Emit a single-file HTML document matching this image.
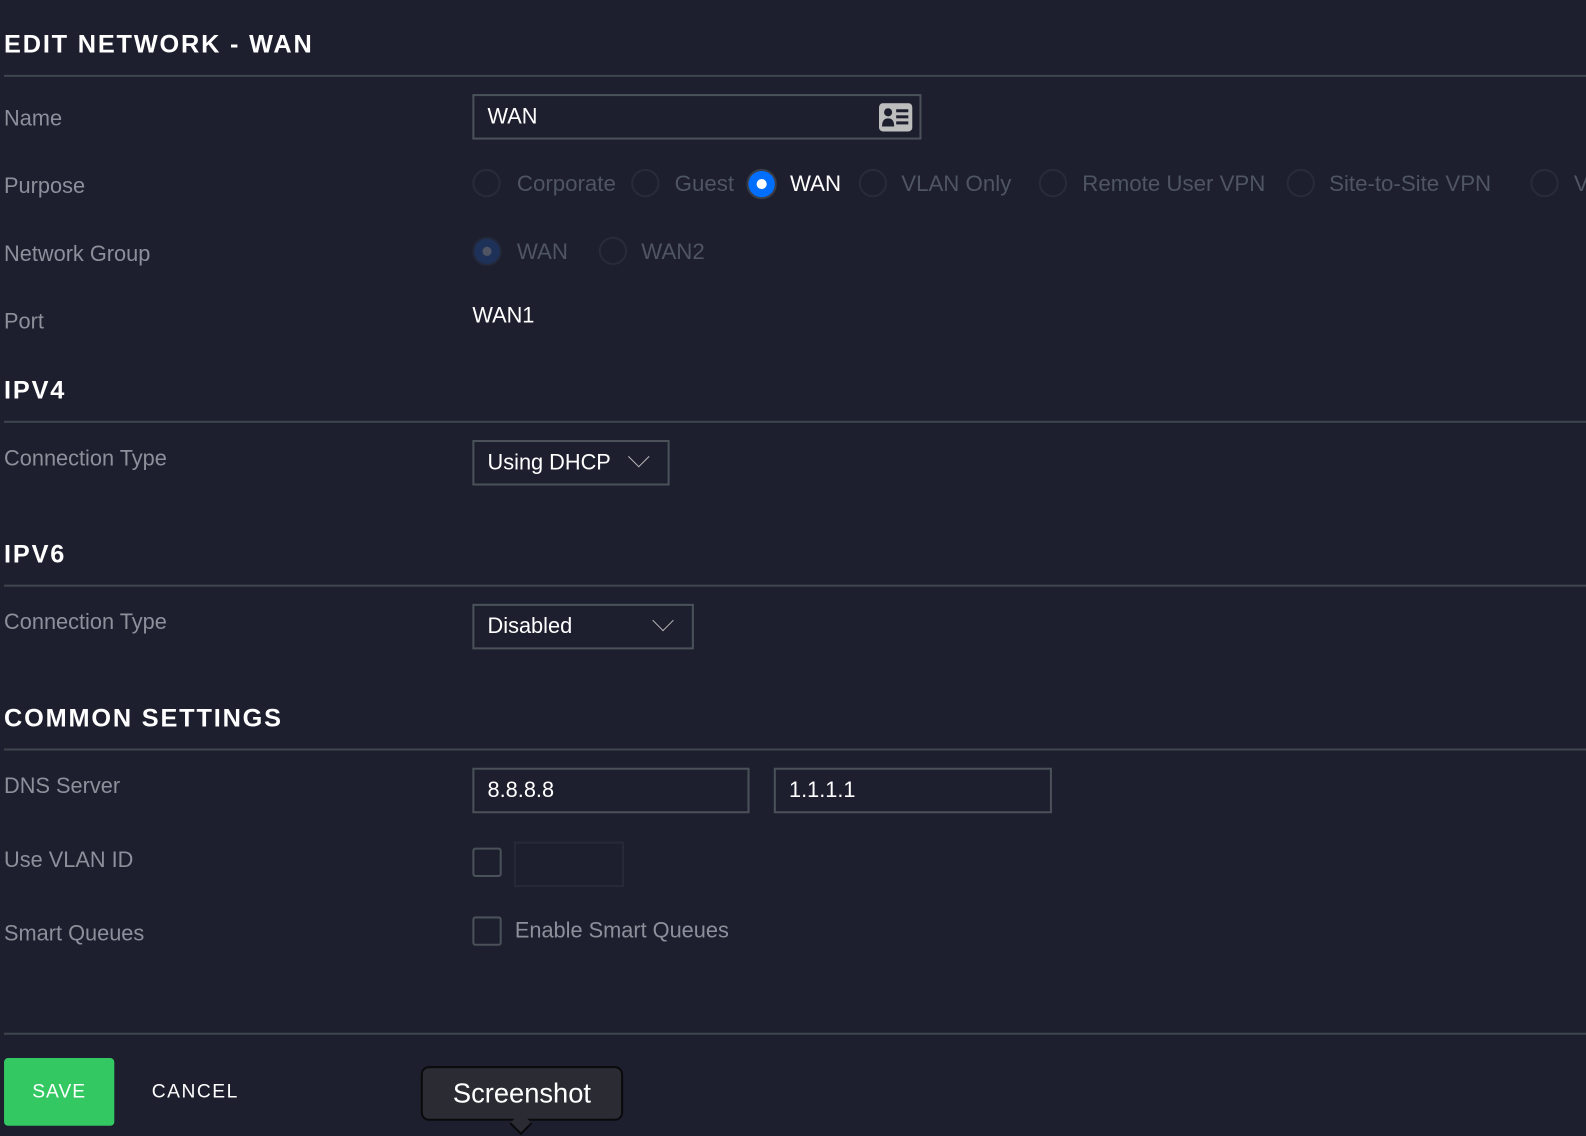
<!DOCTYPE html>
<html><head><style>
body{margin:0;width:1586px;height:1136px;background:#1d1f2e;font-family:"Liberation Sans",sans-serif;overflow:hidden;position:relative}
#w{position:absolute;left:0;top:0;width:1568px;height:1123px;transform:scale(1.0115);transform-origin:0 0}
.a{position:absolute;white-space:nowrap}
.h{color:#fff;font-weight:bold;font-size:25px;letter-spacing:1.8px;line-height:30px}
.l{color:#8c909a;font-size:21.5px;line-height:24px}
.hr{position:absolute;left:4px;right:0;height:2px;background:#3f464e}
.box{position:absolute;border:2px solid #4a5158;box-sizing:border-box;color:#fff;font-size:21.5px;line-height:41px;padding-left:13px}
.r{position:absolute;width:28px;height:28px;border-radius:50%;border:2px solid #282b3a;box-sizing:border-box}
.rt{color:#4f5562;font-size:22px;line-height:24px}
.cb{position:absolute;width:29px;height:29px;border:2px solid #4a5158;border-radius:3px;box-sizing:border-box}
.chev{position:absolute;width:14px;height:14px;border-right:1.5px solid #bbb;border-bottom:1.5px solid #bbb;transform:rotate(45deg)}
</style></head><body><div id="w">
<div class="a h" style="left:4px;top:29px">EDIT NETWORK - WAN</div>
<div class="hr" style="top:74px"></div>
<div class="a l" style="left:4px;top:105px">Name</div>
<div class="box" style="left:467px;top:93px;width:444px;height:45px">WAN</div>
<svg class="a" style="left:869px;top:102px" width="33" height="28" viewBox="0 0 33 28"><rect x="0" y="0" width="33" height="28" rx="4" fill="#bdbdbd"/><circle cx="9" cy="9" r="4" fill="#1d1f2e"/><path d="M3 23 q0-8 6-8 q6 0 6 8z" fill="#1d1f2e"/><rect x="17" y="6" width="12" height="3" fill="#1d1f2e"/><rect x="17" y="12" width="12" height="3" fill="#1d1f2e"/><rect x="17" y="18" width="12" height="3" fill="#1d1f2e"/></svg>

<div class="a l" style="left:4px;top:172px">Purpose</div>
<div class="r" style="left:467px;top:167px"></div><div class="a rt" style="left:511px;top:170px">Corporate</div>
<div class="r" style="left:624px;top:167px"></div><div class="a rt" style="left:667px;top:170px">Guest</div>
<div class="a" style="left:738px;top:167px;width:30px;height:30px;border-radius:50%;background:#006fff;border:2px solid #3a3e48;box-sizing:border-box"><div style="position:absolute;left:8px;top:8px;width:10px;height:10px;border-radius:50%;background:#fff"></div></div>
<div class="a" style="left:781px;top:170px;color:#fff;font-size:22px;line-height:24px">WAN</div>
<div class="r" style="left:849px;top:167px"></div><div class="a rt" style="left:891px;top:170px">VLAN Only</div>
<div class="r" style="left:1027px;top:167px"></div><div class="a rt" style="left:1070px;top:170px">Remote User VPN</div>
<div class="r" style="left:1272px;top:167px"></div><div class="a rt" style="left:1314px;top:170px">Site-to-Site VPN</div>
<div class="r" style="left:1513px;top:167px"></div><div class="a rt" style="left:1556px;top:170px">V</div>

<div class="a l" style="left:4px;top:239px">Network Group</div>
<div class="a" style="left:467px;top:234px;width:29px;height:29px;border-radius:50%;background:#1d3159;border:2px solid #23283a;box-sizing:border-box"><div style="position:absolute;left:8px;top:8px;width:9px;height:9px;border-radius:50%;background:#4f5562"></div></div>
<div class="a rt" style="left:511px;top:237px">WAN</div>
<div class="r" style="left:592px;top:234px"></div><div class="a rt" style="left:634px;top:237px">WAN2</div>

<div class="a l" style="left:4px;top:306px">Port</div>
<div class="a" style="left:467px;top:300px;color:#fff;font-size:21.5px;line-height:24px">WAN1</div>

<div class="a h" style="left:4px;top:371px">IPV4</div>
<div class="hr" style="top:416px"></div>
<div class="a l" style="left:4px;top:441px">Connection Type</div>
<div class="box" style="left:467px;top:435px;width:195px;height:45px">Using DHCP</div>
<div class="chev" style="left:624px;top:444px"></div>

<div class="a h" style="left:4px;top:533px">IPV6</div>
<div class="hr" style="top:578px"></div>
<div class="a l" style="left:4px;top:603px">Connection Type</div>
<div class="box" style="left:467px;top:597px;width:219px;height:45px">Disabled</div>
<div class="chev" style="left:648px;top:606px"></div>

<div class="a h" style="left:4px;top:695px">COMMON SETTINGS</div>
<div class="hr" style="top:740px"></div>
<div class="a l" style="left:4px;top:765px">DNS Server</div>
<div class="box" style="left:467px;top:759px;width:274px;height:45px">8.8.8.8</div>
<div class="box" style="left:765px;top:759px;width:275px;height:45px">1.1.1.1</div>

<div class="a l" style="left:4px;top:838px">Use VLAN ID</div>
<div class="cb" style="left:467px;top:838px"></div>
<div class="a" style="left:508px;top:832px;width:109px;height:45px;border:2px solid #262a38;box-sizing:border-box"></div>

<div class="a l" style="left:4px;top:911px">Smart Queues</div>
<div class="cb" style="left:467px;top:906px"></div>
<div class="a" style="left:509px;top:908px;color:#8c909a;font-size:21.5px;line-height:24px">Enable Smart Queues</div>

<div class="hr" style="top:1021px"></div>
<div class="a" style="left:4px;top:1046px;width:109px;height:67px;background:#34c863;border-radius:4px;color:#fff;font-size:19px;line-height:67px;text-align:center;letter-spacing:1px">SAVE</div>
<div class="a" style="left:150px;top:1068px;color:#fff;font-size:19px;line-height:24px;letter-spacing:1.5px">CANCEL</div>

<div class="a" style="left:416px;top:1054px;width:200px;height:54px;background:#2a2b33;border:2px solid #0a0a0c;border-radius:8px;box-sizing:border-box;color:#fff;font-size:27px;line-height:50px;text-align:center">Screenshot</div>
<div class="a" style="left:507px;top:1103px;width:14px;height:14px;background:#2a2b33;border-right:2px solid #0a0a0c;border-bottom:2px solid #0a0a0c;transform:rotate(45deg)"></div>
</div></body></html>
